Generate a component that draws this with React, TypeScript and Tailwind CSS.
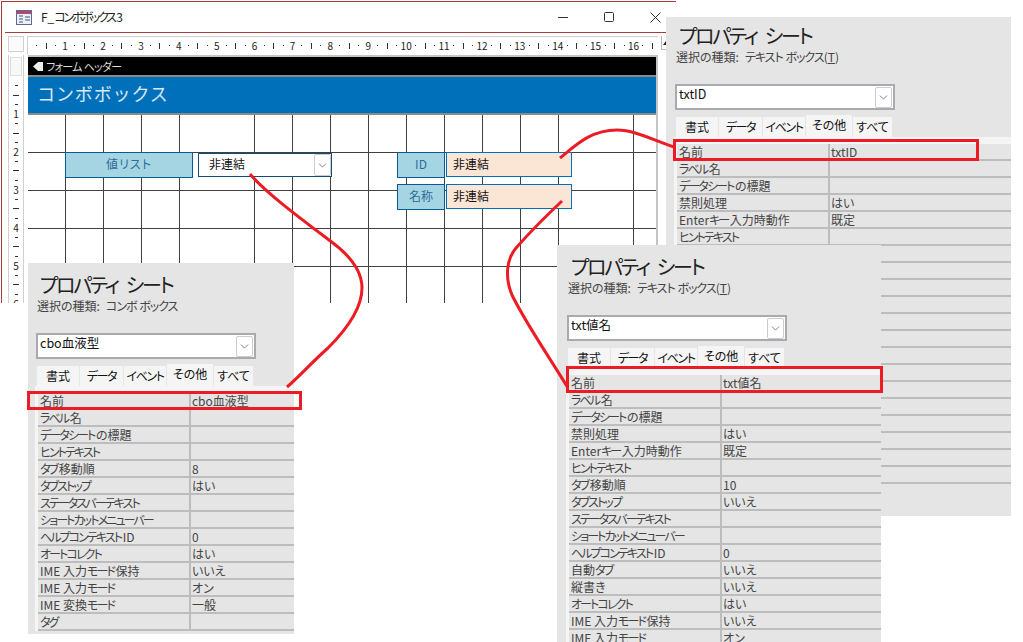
import React from "react";
import { ChevronDown } from "lucide-react";

const font = { fontFamily: '"Noto Sans CJK JP", "Liberation Sans", sans-serif' };

type Row = [string, string];

function K({ t, c = "tracking-[-1.9px] mr-[1.5px]" }: { t: string; c?: string }) {
  const parts = t.split(/([ァ-ヶー]+)/);
  return (
    <>
      {parts.map((p, i) =>
        i % 2 === 1 ? (
          <span key={i} className={c}>
            {p}
          </span>
        ) : (
          <React.Fragment key={i}>{p}</React.Fragment>
        )
      )}
    </>
  );
}

const common: Row[] = [
  ["ステータスバーテキスト", ""],
  ["ショートカットメニューバー", ""],
  ["ヘルプコンテキストID", "0"],
];

const comboRows: Row[] = [
  ["名前", "cbo血液型"],
  ["ラベル名", ""],
  ["データシートの標題", ""],
  ["ヒントテキスト", ""],
  ["タブ移動順", "8"],
  ["タブストップ", "はい"],
  ...common,
  ["オートコレクト", "はい"],
  ["IME 入力モード保持", "いいえ"],
  ["IME 入力モード", "オン"],
  ["IME 変換モード", "一般"],
  ["タグ", ""],
];

const textRows = (name: string, order: string): Row[] => [
  ["名前", name],
  ["ラベル名", ""],
  ["データシートの標題", ""],
  ["禁則処理", "はい"],
  ["Enterキー入力時動作", "既定"],
  ["ヒントテキスト", ""],
  ["タブ移動順", order],
  ["タブストップ", "いいえ"],
  ...common,
  ["自動タブ", "いいえ"],
  ["縦書き", "いいえ"],
  ["オートコレクト", "はい"],
  ["IME 入力モード保持", "いいえ"],
  ["IME 入力モード", "オン"],
  ["IME 変換モード", "一般"],
  ["ふりがな", ""],
  ["住所入力補助", ""],
  ["タグ", ""],
];

function Tabs() {
  const tabs: [string, string][] = [
    ["書式", "w-[42px] h-[20px]"],
    ["データ", "w-[43px] h-[20px]"],
    ["イベント", "w-[42px] h-[20px]"],
    ["その他", "w-[46px] h-[22px] pb-[2px]"],
    ["すべて", "w-[39px] h-[20px]"],
  ];
  return (
    <div className="flex items-end gap-px ml-px mt-[5px] h-[22px]">
      {tabs.map(([t, c]) => (
        <div key={t} className={`${c} bg-[#f5f5f5] flex items-center justify-center whitespace-nowrap text-[12px] leading-none text-[#111]`}>
          <K t={t} c="tracking-[-1.4px]" />
        </div>
      ))}
    </div>
  );
}

function Panel({
  className,
  kind,
  underlineT,
  name,
  rows,
}: {
  className: string;
  kind: string;
  underlineT?: boolean;
  name: string;
  rows: Row[];
}) {
  return (
    <section className={`absolute bg-[#e5e5e5] overflow-hidden flex flex-col ${className}`}>
      <h2 className="text-[20px] leading-[24px] font-normal tracking-[-2.3px] [word-spacing:6px] text-[#222] ml-[4px]">プロパティ シート</h2>
      <p className="text-[12px] leading-[16px] text-[#444] ml-px mt-[1px] whitespace-nowrap">
        選択の種類:
        <span className="ml-[6px]">
          <K t={kind} c="tracking-[-1px]" />
          {underlineT && (
            <>
              (<u>T</u>)
            </>
          )}
        </span>
      </p>
      <div className="mt-[19px] w-[220px] h-[26px] border-2 border-[#a9a9b0] bg-white flex justify-between pl-[2px] pr-px py-px">
        <span className="text-[12.5px] leading-[14px] text-[#111]">{name}</span>
        <span className="w-[17px] h-[21px] border border-[#cccccc] rounded-[2px] flex items-center justify-center text-[#666]">
          <ChevronDown size={13} strokeWidth={1.5} />
        </span>
      </div>
      <Tabs />
      <div className="-ml-px bg-[#f5f5f5] pt-[7px] pl-[3px]">
        {rows.map(([k, v], i) => (
          <div key={i} className="flex h-[17px] border-b-2 border-[#bdbdbd] bg-[#e5e5e5] text-[12px] leading-[15px] text-[#444]">
            <div className="w-[153px] shrink-0 border-r-2 border-[#bdbdbd] pl-[2px] whitespace-nowrap overflow-hidden">
              <K t={k} />
            </div>
            <div className="pl-px whitespace-nowrap">{v}</div>
          </div>
        ))}
      </div>
    </section>
  );
}

function HRuler() {
  const nums = Array.from({ length: 17 }, (_, i) => i + 1);
  return (
    <div className="flex pl-[4px] w-[630px] h-[17px] items-center overflow-hidden text-[10px] leading-none text-[#222]">
      {nums.map((n) => (
        <div key={n} className="flex shrink-0 w-[37.9px]">
          <span className="w-1/4 flex justify-center items-center"><i className="w-px h-px bg-[#333] block" /></span>
          <span className="w-1/4 flex justify-center items-center"><i className="w-px h-[6px] bg-[#333] block" /></span>
          <span className="w-1/4 flex justify-center items-center"><i className="w-px h-px bg-[#333] block" /></span>
          <span className="w-1/4 flex justify-center items-center">{n}</span>
        </div>
      ))}
    </div>
  );
}

function VRuler() {
  const nums = [1, 2, 3, 4, 5, 6];
  return (
    <div className="flex flex-col items-center pt-[5px] text-[10px] leading-none text-[#222] w-[14px]">
      {nums.map((n) => (
        <div key={n} className="flex flex-col items-center shrink-0 h-[37.9px]">
          <span className="h-1/4 flex items-center"><i className="w-[3px] h-px bg-[#333] block" /></span>
          <span className="h-1/4 flex items-center"><i className="w-[6px] h-px bg-[#333] block" /></span>
          <span className="h-1/4 flex items-center"><i className="w-[3px] h-px bg-[#333] block" /></span>
          <span className="h-1/4 flex items-center">{n}</span>
        </div>
      ))}
    </div>
  );
}

function FormWindow() {
  return (
    <section className="absolute left-[1px] top-[1px] w-[675px] h-[302px] border-l border-t border-[#a83c3c] overflow-hidden flex flex-col">
      <header className="h-[31px] ml-[3px] border-b border-[#a83c3c] flex items-center shrink-0">
        <svg width="17" height="15" viewBox="0 0 17 15" className="ml-[11px]">
          <rect x="0.5" y="0.5" width="15" height="14" fill="#eef0f8" stroke="#5b6a92" />
          <rect x="1" y="1" width="14" height="3" fill="#b5476a" />
          <path d="M3 6h4M3 9h4M3 12h4M9 7h5M9 10h5" stroke="#47557c" fill="none" />
        </svg>
        <h1 className="ml-[8px] text-[12px] leading-none font-normal text-[#222]">
          <K t="F_コンボボックス3" c="tracking-[-2.2px] mr-[1.5px]" />
        </h1>
        <div className="ml-auto flex items-center mr-[15px] gap-[36px]">
          <svg width="10" height="10" viewBox="0 0 10 10"><path d="M0 5.5h10" stroke="#333" /></svg>
          <svg width="10" height="10" viewBox="0 0 10 10"><rect x="0.5" y="0.5" width="9" height="9" rx="1" fill="none" stroke="#333" /></svg>
          <svg width="11" height="11" viewBox="0 0 11 11"><path d="M0.5 0.5l10 10M10.5 0.5l-10 10" stroke="#333" /></svg>
        </div>
      </header>
      <div className="pl-[6px] pt-[3px] flex gap-[3px] h-[22px] shrink-0">
        <div className="w-[16px] h-[16px] border border-[#cfcfcf] bg-[#fbfbfb]" />
        <div className="border-l border-t border-[#cfcfcf] w-[631px]"><HRuler /></div>
        <div className="w-[8px] h-[14px] border-l border-b border-[#bbbbbb] flex items-center justify-center">
          <svg width="6" height="4" viewBox="0 0 6 4"><path d="M3 0l3 4H0z" fill="#222" /></svg>
        </div>
      </div>
      <div className="flex flex-1 min-h-0 pl-[6px] gap-[4px]">
        <div className="flex flex-col border-x border-[#cfcfcf] w-[16px] pt-[2px]">
          <div className="w-[12px] h-[19px] mx-auto border border-[#dddddd] bg-[#f8f8f8] shrink-0" />
          <VRuler />
        </div>
        <div className="w-[630px] flex flex-col border-t-2 border-r-2 border-[#c4c4c4]">
          <div className="h-[18px] bg-black flex items-center pl-[5px] gap-[3px] text-[11px] leading-none tracking-[-0.7px] text-[#dddddd] shrink-0">
            <svg width="10" height="9" viewBox="0 0 10 9"><path d="M0 4.5L5 0h5v9H5z" fill="#eeeeee" /></svg>
            <span>フォーム ヘッダー</span>
          </div>
          <div className="h-[40px] bg-[#0070bb] border-y-2 border-[#8a8a8a] shrink-0 flex items-center pl-[9px] pb-[5px] text-[18px] leading-none tracking-[0.9px] text-[#d8e8f4] [font-feature-settings:normal]">
            コンボボックス
          </div>
          <div className="relative flex-1 bg-white bg-[repeating-linear-gradient(90deg,transparent_0,transparent_36.9px,#404040_36.9px,#404040_37.9px),repeating-linear-gradient(180deg,transparent_0,transparent_36.9px,#404040_36.9px,#404040_37.9px)]">
            <div className="absolute left-[37px] top-[37px] w-[128px] h-[26px] bg-[#a5d5e3] border border-[#0a5a92] flex items-center justify-center text-[12px] tracking-[1px] leading-none pb-[3px] text-[#2f6c99]">値リスト</div>
            <div className="absolute left-[170px] top-[38px] w-[134px] h-[24px] bg-white border border-[#154b75] flex items-center justify-between pl-[10px] text-[12px] leading-none text-[#111]">
              <span className="pb-[2px]">非連結</span>
              <span className="w-[17px] h-[22px] border border-[#cccccc] rounded-[2px] flex items-center justify-center text-[#666]">
                <ChevronDown size={13} strokeWidth={1.5} />
              </span>
            </div>
            <div className="absolute left-[369px] top-[37px] w-[48px] h-[26px] bg-[#a5d5e3] border border-[#0a5a92] flex items-center justify-center text-[12px] leading-none pb-[3px] text-[#2f6c99]">ID</div>
            <div className="absolute left-[369px] top-[69px] w-[48px] h-[26px] bg-[#a5d5e3] border border-[#0a5a92] flex items-center justify-center text-[12px] leading-none pb-[3px] text-[#2f6c99]">名称</div>
            <div className="absolute left-[418px] top-[37px] w-[126px] h-[25px] bg-[#fbe5d5] border border-[#0070bb] flex items-center pl-[6px] text-[12px] leading-none pb-[2px] text-[#111]">非連結</div>
            <div className="absolute left-[418px] top-[69px] w-[126px] h-[25px] bg-[#fbe5d5] border border-[#0070bb] flex items-center pl-[6px] text-[12px] leading-none pb-[2px] text-[#111]">非連結</div>
          </div>
        </div>
      </div>
    </section>
  );
}

export default function App() {
  return (
    <div style={font} className="relative w-[1023px] h-[642px] overflow-hidden bg-white [font-feature-settings:'palt']">
      <FormWindow />
      <Panel
        className="left-[666px] top-[17px] w-[345px] h-[499px] pl-[9px] pt-[7px]"
        kind="テキスト ボックス"
        underlineT
        name="txtID"
        rows={textRows("txtID", "9")}
      />
      <Panel
        className="left-[28px] top-[263px] w-[266px] h-[371px] pl-[8px] pt-[10px]"
        kind="コンボ ボックス"
        name="cbo血液型"
        rows={comboRows}
      />
      <Panel
        className="left-[557px] top-[245px] w-[324px] h-[397px] pl-[10px] pt-[10px]"
        kind="テキスト ボックス"
        underlineT
        name="txt値名"
        rows={textRows("txt値名", "10")}
      />
      <svg className="absolute inset-0 pointer-events-none" width="1023" height="642" viewBox="0 0 1023 642" fill="none" stroke="#ed1c24" strokeWidth="3">
        <rect x="674.5" y="140.5" width="303" height="19" />
        <rect x="567.5" y="367.5" width="314" height="24" />
        <rect x="28.5" y="392.5" width="272" height="16" />
        <path d="M250 174C265 192 300 218 329 240C350 255 362 270 362 288C362 305 352 324 328 348C312 362 300 376 287 387" />
        <path d="M560 158C575 146 590 130 617 130C635 130 655 141 674 147" />
        <path d="M562 201C545 217 530 232 516 248C506 260 505 278 512 295C525 322 548 355 568 388" />
      </svg>
    </div>
  );
}
